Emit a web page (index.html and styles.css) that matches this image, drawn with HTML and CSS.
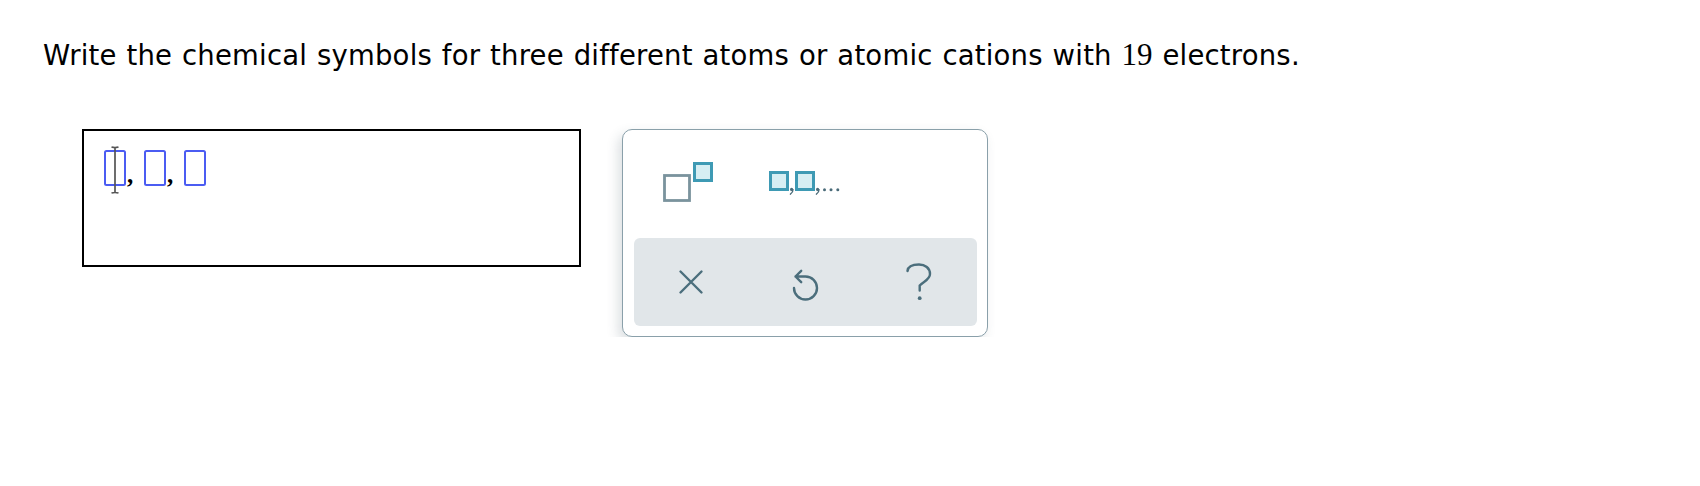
FILE: index.html
```html
<!DOCTYPE html>
<html lang="en">
<head>
<meta charset="utf-8">
<title>Chemical symbols</title>
<link rel="stylesheet" href="styles.css">
</head>
<body>
<div class="page">
  <p class="prompt">Write the chemical symbols for three different atoms or atomic cations with <span class="num">19</span> electrons.</p>
  <div class="work">
    <div class="answer">
      <div class="slots">
        <span class="slot">
          <svg class="caret" width="10" height="48" viewBox="0 0 10 48" aria-hidden="true">
            <path d="M5 2 V46 M1.5 1 Q5 2 8.5 1 M1.5 47 Q5 46 8.5 47" fill="none" stroke="#555" stroke-width="1.7"/>
          </svg>
        </span><span class="sep">,</span><span class="slot"></span><span class="sep">,</span><span class="slot"></span>
      </div>
    </div>
    <div class="palette">
      <div class="tools">
        <button class="tool tool-sup" type="button" aria-label="superscript">
          <svg width="52" height="42" viewBox="0 0 52 42">
            <rect x="2.5" y="14.5" width="25" height="25" fill="#fff" stroke="#7a939d" stroke-width="2.8"/>
            <rect x="32.5" y="2.5" width="17" height="17" fill="#d6eef3" stroke="#3e9ab4" stroke-width="3"/>
          </svg>
        </button>
        <button class="tool" type="button" aria-label="list">
          <svg width="72" height="29" viewBox="0 0 72 29">
            <rect x="1.5" y="5.5" width="17" height="17" fill="#d6eef3" stroke="#3e9ab4" stroke-width="3"/>
            <rect x="27.5" y="5.5" width="17" height="17" fill="#d6eef3" stroke="#3e9ab4" stroke-width="3"/>
            <circle cx="22.6" cy="22.4" r="1.6" fill="#4a6b79"/>
            <path d="M24 22.6 Q24 25.6 21.4 27.2" fill="none" stroke="#4a6b79" stroke-width="1.4" stroke-linecap="round"/>
            <circle cx="48.6" cy="22.4" r="1.6" fill="#4a6b79"/>
            <path d="M50 22.6 Q50 25.6 47.4 27.2" fill="none" stroke="#4a6b79" stroke-width="1.4" stroke-linecap="round"/>
            <circle cx="55.5" cy="22.7" r="1.5" fill="#4a6b79"/>
            <circle cx="62" cy="22.7" r="1.5" fill="#4a6b79"/>
            <circle cx="68.8" cy="22.7" r="1.5" fill="#4a6b79"/>
          </svg>
        </button>
        <span class="tool"></span>
      </div>
      <div class="actions">
        <button class="act" type="button" aria-label="clear">
          <svg width="24" height="24" viewBox="0 0 24 24">
            <path d="M1.5 1.5 L22.5 22.5 M22.5 1.5 L1.5 22.5" fill="none" stroke="#4b6e7c" stroke-width="2.4" stroke-linecap="round"/>
          </svg>
        </button>
        <button class="act" type="button" aria-label="undo">
          <svg class="ico-undo" width="30" height="36" viewBox="0 0 30 36">
            <path d="M4 23 A11.5 11.5 0 1 0 15.5 11.5 H5.5 M11.2 5.8 L5.5 11.5 L11.2 17.2" fill="none" stroke="#4b6e7c" stroke-width="2.4" stroke-linecap="round" stroke-linejoin="round"/>
          </svg>
        </button>
        <button class="act" type="button" aria-label="help">
          <svg width="44" height="52" viewBox="0 0 44 52">
            <path d="M9.5 15 C10 10.5 15 8.5 21 8.5 C27 8.5 32 12 32 18 C32 24 25 25.5 21.7 29.5 V34.5" fill="none" stroke="#4b6e7c" stroke-width="2.4" stroke-linecap="round" stroke-linejoin="round"/>
            <circle cx="21.7" cy="42.2" r="1.9" fill="#4b6e7c"/>
          </svg>
        </button>
      </div>
    </div>
  </div>
</div>
</body>
</html>
```
FILE: styles.css
```css
body {
  margin: 0;
  background: #fff;
  font-family: "DejaVu Sans", "Liberation Sans", sans-serif;
  color: #000;
}

.page {
  padding: 37.5px 0 0 43px;
}

.prompt {
  margin: 0;
  font-size: 27.5px;
  line-height: 34px;
  letter-spacing: 0.2px;
  word-spacing: 0.9px;
}

.num {
  font-family: "Liberation Serif", serif;
  font-size: 31px;
  line-height: 1;
  letter-spacing: 0;
}

.work {
  display: flex;
  align-items: flex-start;
  gap: 41px;
  margin-top: 57.5px;
  margin-left: 39px;
}

.answer {
  box-sizing: border-box;
  width: 499px;
  height: 138px;
  border: 2px solid #000;
  padding: 19px 0 0 20px;
}

.slots {
  display: flex;
  align-items: flex-end;
}

.slot {
  position: relative;
  box-sizing: border-box;
  width: 22px;
  height: 36px;
  border: 2.4px solid #4b5cf2;
  border-radius: 2.5px;
}

.caret {
  position: absolute;
  left: 4px;
  top: -6px;
}

.sep {
  width: 18px;
  font-family: "Liberation Serif", serif;
  font-weight: bold;
  font-size: 25px;
  line-height: 25px;
  margin-bottom: -1px;
  padding-left: 1px;
  box-sizing: border-box;
}

.palette {
  box-sizing: border-box;
  width: 366px;
  height: 208px;
  border: 1.5px solid #8aa0aa;
  border-radius: 10px;
  padding: 0 10px 9.5px 10.5px;
  background: #fff;
  box-shadow: -4px 5px 12px rgba(60, 85, 95, 0.18);
  display: flex;
  flex-direction: column;
}

.tools {
  display: grid;
  grid-template-columns: repeat(3, 1fr);
  height: 103.5px;
  margin-bottom: 4px;
  align-items: center;
  justify-items: center;
}

.tool,
.act {
  border: 0;
  background: none;
  padding: 0;
  margin: 0;
  display: flex;
  align-items: center;
  justify-content: center;
}

.tool svg,
.act svg {
  display: block;
  overflow: visible;
}

.tool-sup {
  margin-right: 4.6px;
}

.actions {
  display: grid;
  grid-template-columns: repeat(3, 1fr);
  height: 88px;
  background: #e1e6e9;
  border-radius: 6px;
  align-items: center;
  justify-items: center;
}

.ico-undo {
  margin-top: 2px;
}
```
